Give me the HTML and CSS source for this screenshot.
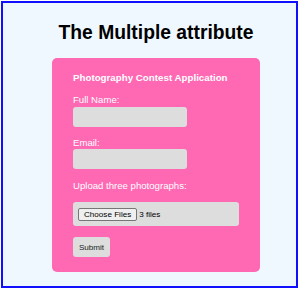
FILE: index.html
```html
<!DOCTYPE html>
<html>
<head>
<meta charset="utf-8">
<title>The Multiple attribute</title>
<link rel="stylesheet" href="styles.css">
</head>
<body>
<div class="frame">
  <div class="content">
    <h1 class="title">The Multiple attribute</h1>
    <form class="card">
      <h3 class="card-title">Photography Contest Application</h3>
      <label class="label first">Full Name:</label>
      <input class="field" type="text">
      <label class="label">Email:</label>
      <input class="field" type="text">
      <label class="label">Upload three photographs:</label>
      <div class="file-input">
        <span class="file-btn">Choose Files</span>
        <span class="file-text">3 files</span>
      </div>
      <button class="submit" type="button">Submit</button>
    </form>
  </div>
</div>
</body>
</html>
```
FILE: styles.css
```css
html {
  background: #ffffff;
}
body {
  margin: 0;
  font-family: "Liberation Sans", Arial, sans-serif;
}
.frame {
  margin: 1px 0 0 1px;
  width: 297px;
  height: 287px;
  box-sizing: border-box;
  border: 2px solid #1010ff;
  background: #f0f8ff;
  overflow: hidden;
}
.content {
  margin-left: 49px;
  width: 208px;
}
.title {
  margin: 18px 0 0;
  font-size: 19.3px;
  line-height: 24px;
  font-weight: bold;
  text-align: center;
  color: #000;
  white-space: nowrap;
}
.card {
  margin: 13px 0 0;
  background: #ff69b4;
  border-radius: 5px;
  padding: 14px 21px 15px;
  display: flex;
  flex-direction: column;
  align-items: flex-start;
}
.card-title {
  margin: 0;
  font-size: 9.75px;
  line-height: 12px;
  font-weight: bold;
  color: #fff;
  white-space: nowrap;
}
.label {
  display: block;
  margin-top: 10.3px;
  font-size: 9.6px;
  line-height: 12px;
  color: #fff;
}
.field {
  display: block;
  margin: 0.4px 0 0;
  width: 114px;
  height: 20px;
  box-sizing: border-box;
  border: none;
  border-radius: 3px;
  background: #dddddd;
  padding: 0;
}
.file-input {
  margin-top: 10.4px;
  width: 166px;
  height: 24px;
  box-sizing: border-box;
  padding: 6px 5px 5px;
  background: #dddddd;
  border-radius: 3px;
  display: flex;
  align-items: center;
  gap: 2px;
  font-size: 8.1px;
  color: #000;
}
.file-btn {
  height: 13px;
  box-sizing: border-box;
  padding: 0 5px;
  border: 1px solid #767676;
  border-radius: 2px;
  background: #efefef;
  line-height: 11px;
  white-space: nowrap;
}
.file-text {
  line-height: 13px;
}
.submit {
  margin-top: 11.3px;
  width: 37px;
  height: 20px;
  padding: 0;
  border: none;
  border-radius: 3px;
  background: #dddddd;
  font-family: "Liberation Sans", Arial, sans-serif;
  font-size: 8.1px;
  color: #222;
}
```
